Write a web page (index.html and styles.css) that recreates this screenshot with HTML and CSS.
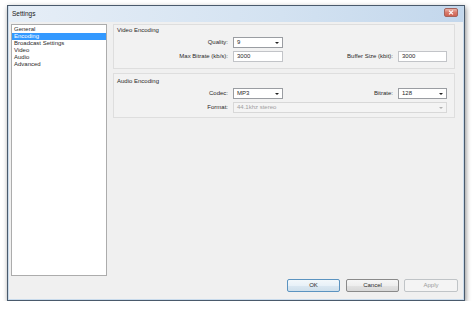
FILE: index.html
```html
<!DOCTYPE html>
<html>
	<head>
		<meta charset="UTF-8">
		<title>Settings</title>
		<link rel="stylesheet" href="styles.css">
	</head>
	<body>
		<div class="window">
			<div class="titlebar">
				<span class="title">Settings</span>
				<span class="close">
					<svg width="6" height="5" viewBox="0 0 6 5"><path d="M1 0.6 L5 4.4 M5 0.6 L1 4.4" stroke="#fff" stroke-width="1.2"/></svg>
				</span>
			</div>
			<div class="client">
				<div class="main">
					<ul class="list">
						<li>General</li>
						<li class="selected">Encoding</li>
						<li>Broadcast Settings</li>
						<li>Video</li>
						<li>Audio</li>
						<li>Advanced</li>
					</ul>
					<div class="panel">
						<!-- 视频编码 -->
						<div class="group video">
							<div class="group-title">Video Encoding</div>
							<div class="rows">
								<label>Quality:</label>
								<div class="combo">9<span class="arrow"></span></div>
								<span></span>
								<span></span>
								<label>Max Bitrate (kb/s):</label>
								<div class="edit">3000</div>
								<label>Buffer Size (kbit):</label>
								<div class="edit">3000</div>
							</div>
						</div>
						<!-- 音频编码 -->
						<div class="group audio">
							<div class="group-title">Audio Encoding</div>
							<div class="rows">
								<label>Codec:</label>
								<div class="combo">MP3<span class="arrow"></span></div>
								<label>Bitrate:</label>
								<div class="combo">128<span class="arrow"></span></div>
								<label>Format:</label>
								<div class="combo wide disabled">44.1khz stereo<span class="arrow"></span></div>
							</div>
						</div>
					</div>
				</div>
				<div class="buttons">
					<div class="btn default">OK</div>
					<div class="btn">Cancel</div>
					<div class="btn disabled">Apply</div>
				</div>
			</div>
		</div>
	</body>
</html>
```
FILE: styles.css
```css
*{
	margin: 0;
	padding: 0;
	box-sizing: border-box;
}
body{
	background-color: #fff;
	font-family: "Liberation Sans", Arial, sans-serif;
	font-size: 6px;
	color: #2a2a2a;
	padding: 5px 0 0 7px;
}
.window{
	width: 458px;
	height: 296px;
	border: 1px solid #4a5a6c;
	background-color: #c9dbec;
	padding: 0 1px 1px;
	display: flex;
	flex-direction: column;
	box-shadow: 1px 2px 5px rgba(0,0,0,0.45);
}
.titlebar{
	height: 16px;
	flex: none;
	display: flex;
	align-items: flex-start;
	justify-content: space-between;
	padding-left: 3px;
	background: linear-gradient(to right, #e6eef7, #d3e2f1 60%, #c3d7ec);
}
.title{
	line-height: 16px;
	font-size: 6.5px;
	color: #1a1a1a;
}
.close{
	width: 14px;
	height: 9px;
	margin: 2px 5px 0 0;
	display: flex;
	align-items: center;
	justify-content: center;
	border: 1px solid #a4635c;
	border-radius: 2px;
	background: linear-gradient(#eab4aa, #d97a6b 50%, #cf6352);
}
.client{
	flex: 1;
	background-color: #f0f0f0;
	padding: 2px 5px 7px 2px;
	display: flex;
	flex-direction: column;
}
.main{
	display: flex;
	height: 252px;
}
.list{
	width: 96px;
	height: 252px;
	background-color: #fff;
	border: 1px solid #acacac;
	list-style: none;
	padding-top: 1px;
}
.list li{
	line-height: 7px;
	padding-left: 2px;
}
.list .selected{
	background-color: #3399ff;
	color: #fff;
}
.panel{
	width: 342px;
	margin-left: 6px;
}
.group{
	border: 1px solid #dedede;
	background-color: #f2f2f2;
	padding: 1px 7px 6px 3px;
}
.group.audio{
	margin-top: 4px;
	padding-top: 3px;
	padding-bottom: 4px;
}
.group-title{
	line-height: 9px;
	margin-bottom: 2px;
}
.rows{
	display: grid;
	grid-template-columns: 112px 50px 107px 49px;
	grid-auto-rows: 11px;
	column-gap: 4px;
	row-gap: 3px;
}
.rows label{
	text-align: right;
	line-height: 11px;
	padding-right: 1px;
}
.edit, .combo{
	position: relative;
	height: 11px;
	line-height: 9px;
	padding-left: 3px;
	background-color: #fff;
	border: 1px solid #c2c4c8;
}
.combo{
	border-color: #9a9da2;
}
.combo.wide{
	grid-column: 2 / 5;
}
.arrow{
	position: absolute;
	right: 3px;
	top: 4px;
	width: 0;
	height: 0;
	border-left: 2px solid transparent;
	border-right: 2px solid transparent;
	border-top: 2px solid #222;
}
.combo.disabled{
	background-color: #f4f4f4;
	border-color: #d8d8d8;
	color: #a0a0a0;
}
.combo.disabled .arrow{
	border-top-color: #b0b0b0;
}
.buttons{
	margin-top: 3px;
	display: flex;
	justify-content: flex-end;
	gap: 6px;
}
.btn{
	width: 53px;
	height: 13px;
	line-height: 11px;
	text-align: center;
	border: 1px solid #8a8a8a;
	border-radius: 2px;
	background: linear-gradient(#f6f6f6, #eeeeee 50%, #e3e3e3 51%, #d8d8d8);
}
.btn.default{
	border-color: #5b93c0;
	background: linear-gradient(#f3f8fb, #e8f1f8 50%, #dbe8f2 51%, #cfe0ec);
}
.btn.disabled{
	width: 54px;
	margin-left: -1px;
	border-color: #c0c4c7;
	background: #f4f4f4;
	color: #9a9a9a;
}
```
